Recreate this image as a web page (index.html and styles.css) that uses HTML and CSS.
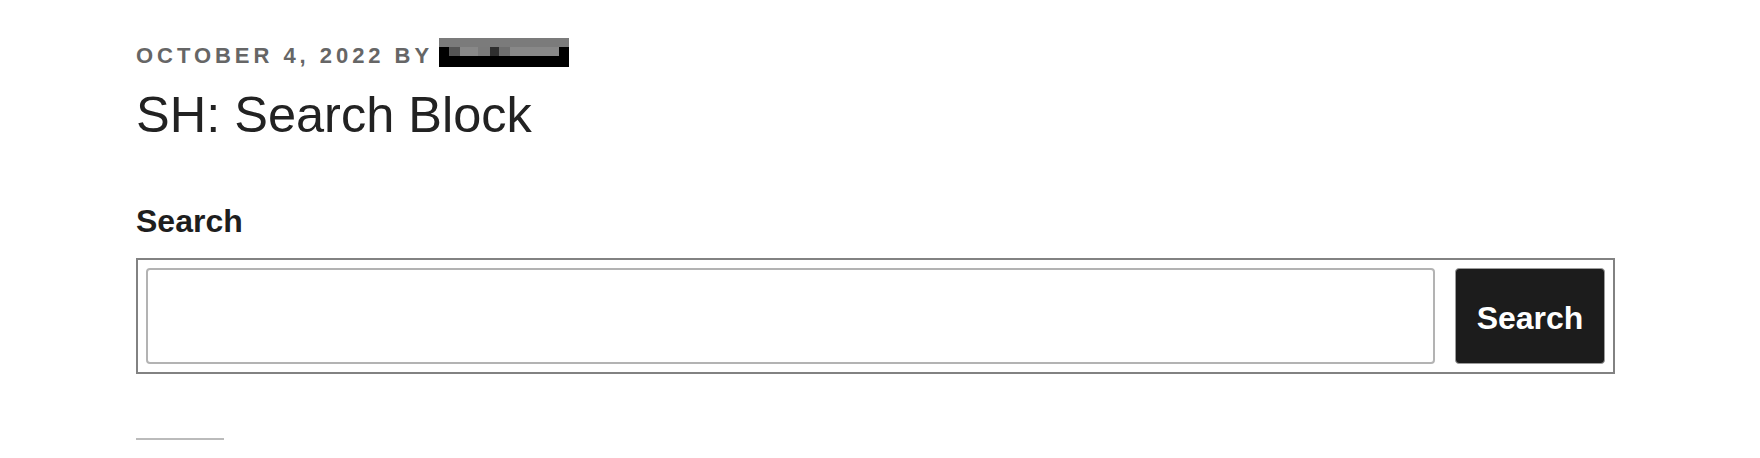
FILE: index.html
```html
<!DOCTYPE html>
<html lang="en">
<head>
<meta charset="utf-8">
<title>SH: Search Block</title>
<link rel="stylesheet" href="styles.css">
</head>
<body>
<main class="page">
  <div class="meta">
    <span class="meta-text">October 4, 2022 by</span>
    <span class="redacted" aria-label="author">
      <span class="r-top"></span>
      <span class="r-mid">
        <span class="c-k w10"></span>
        <span class="c-d w11"></span>
        <span class="c-g w18"></span>
        <span class="c-m w12"></span>
        <span class="c-x w9"></span>
        <span class="c-n w11"></span>
        <span class="c-g w49"></span>
        <span class="c-k w10"></span>
      </span>
      <span class="r-bot"></span>
    </span>
  </div>
  <h1 class="title">SH: Search Block</h1>
  <form class="search" role="search">
    <label class="search-label" for="s">Search</label>
    <div class="search-wrap">
      <input class="search-input" id="s" type="search">
      <button class="search-button" type="button">Search</button>
    </div>
  </form>
  <div class="sep"></div>
</main>
</body>
</html>
```

FILE: styles.css
```css
html, body {
  margin: 0;
  padding: 0;
  background: #fff;
}
body {
  font-family: "Liberation Sans", Arial, Helvetica, sans-serif;
  color: #222;
}
.page {
  padding: 38px 0 0 136px;
  width: 1479px;
}
.meta {
  display: flex;
  align-items: flex-start;
}
.meta-text {
  padding-top: 1px;
  font-size: 22px;
  line-height: 33px;
  font-weight: 700;
  letter-spacing: 0.18em;
  text-transform: uppercase;
  color: #666;
}
.redacted {
  display: flex;
  flex-direction: column;
  width: 130px;
  height: 29px;
  margin-left: 6px;
  background: #000;
}
.r-top {
  height: 9px;
  background: #7b7b7b;
}
.r-mid {
  display: flex;
  height: 9px;
}
.r-bot {
  height: 11px;
  background: #000;
}
.c-k { background: #000; }
.c-d { background: #555; }
.c-g { background: #888; }
.c-m { background: #7a7a7a; }
.c-x { background: #2f2f2f; }
.c-n { background: #6e6e6e; }
.w9 { width: 9px; }
.w10 { width: 10px; }
.w11 { width: 11px; }
.w12 { width: 12px; }
.w18 { width: 18px; }
.w49 { width: 49px; }

.title {
  margin: 11px 0 0;
  font-size: 50.5px;
  line-height: 63px;
  font-weight: 400;
  color: #222;
}
.search {
  margin: 54.5px 0 0;
}
.search-label {
  display: block;
  font-size: 32px;
  line-height: 40px;
  font-weight: 700;
  color: #1e1e1e;
}
.search-wrap {
  display: flex;
  gap: 20px;
  box-sizing: border-box;
  width: 1479px;
  margin-top: 17.7px;
  padding: 8px;
  border: 2px solid #828282;
}
.search-input {
  flex: 1;
  box-sizing: border-box;
  height: 96px;
  margin: 0;
  border: 2px solid #b3b3b3;
  border-radius: 4px;
  background: #fff;
  font-family: inherit;
  font-size: 32px;
}
.search-button {
  box-sizing: border-box;
  width: 150px;
  height: 96px;
  margin: 0;
  padding: 4px 0 0;
  border: 1px solid #9c9c9c;
  border-radius: 4px;
  background: #1c1c1c;
  color: #fff;
  font-family: inherit;
  font-size: 32px;
  font-weight: 700;
  line-height: 1;
}
.sep {
  width: 88px;
  height: 2px;
  margin-top: 64.3px;
  background: #bbb;
}
```
